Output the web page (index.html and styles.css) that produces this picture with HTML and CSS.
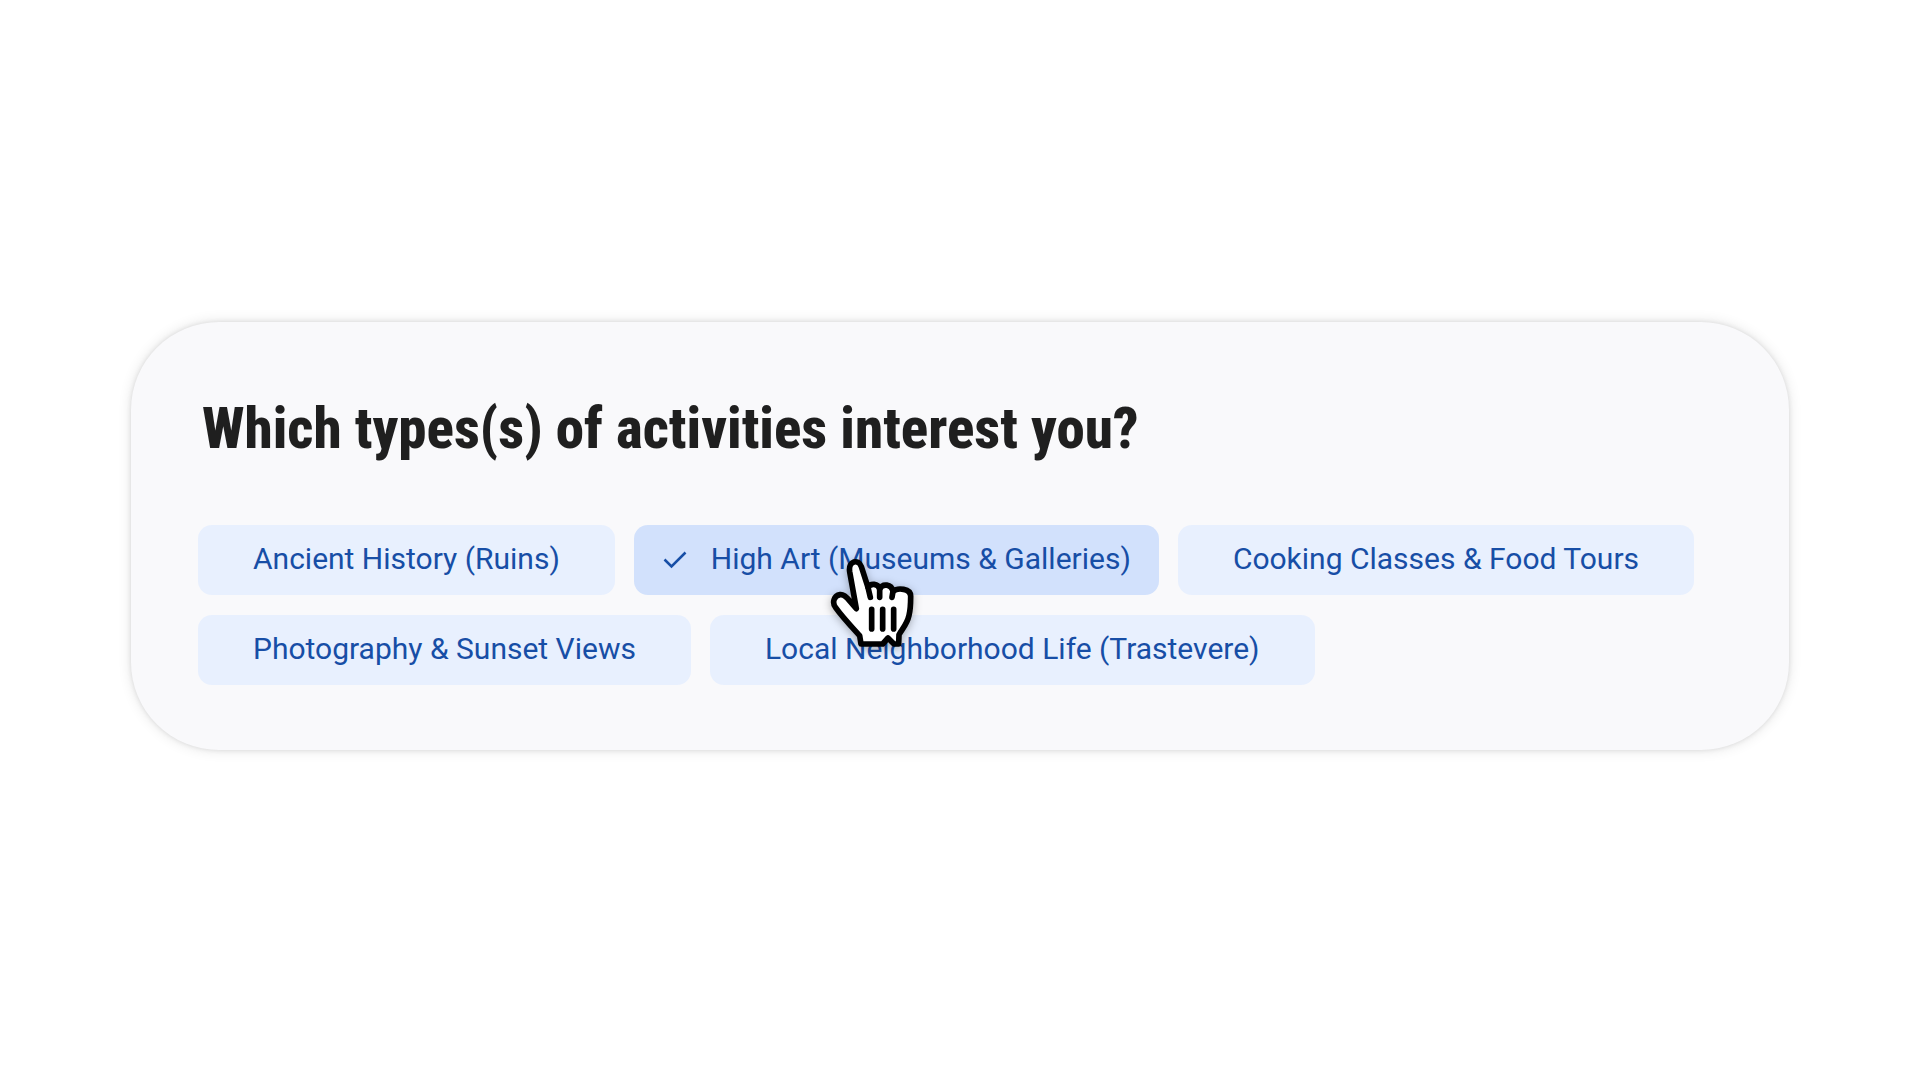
FILE: index.html
```html
<!DOCTYPE html>
<html lang="en">
<head>
<meta charset="utf-8">
<meta name="viewport" content="width=device-width, initial-scale=1">
<title>Activities</title>
<link rel="stylesheet" href="styles.css">
</head>
<body>
<main class="page">
  <section class="card" aria-labelledby="question">
    <h1 class="question" id="question">Which types(s) of activities interest you?</h1>
    <div class="chips" role="group" aria-labelledby="question">
      <label class="chip"><input class="chip-input" type="checkbox" name="activity">Ancient History (Ruins)</label>
      <label class="chip chip-selected">
        <input class="chip-input" type="checkbox" name="activity" checked>
        <svg class="check" viewBox="0 0 26 26" aria-hidden="true"><path d="M2.5 13.5 9.5 20.500 23.500 6.500"/></svg>
        <span>High Art (Museums &amp; Galleries)</span>
        <svg class="pointer" viewBox="51 48 276 288" aria-hidden="true">
          <path class="hand" d="M153 312 L149 287 C126 262 96 230 77 203 C65 187 72 167 90 164 C103 162 112 174 119 183 L139 206 L119 95 C114 62 146 56 154 80 L174 142 C182 129 204 130 209 147 C218 129 244 132 249 154 C262 143 303 144 302 170 C302 190 301 210 297 226 C291 254 275 268 267 284 L266 312 H252 L234 294 L218 312 Z"/>
          <path class="line" d="M174 142 L181 172 M209 147 V172 M249 154 L246 172"/>
          <path class="line" d="M185 208 V267 M218 208 V267 M251 208 V267"/>
        </svg>
      </label>
      <label class="chip"><input class="chip-input" type="checkbox" name="activity">Cooking Classes &amp; Food Tours</label>
      <label class="chip"><input class="chip-input" type="checkbox" name="activity">Photography &amp; Sunset Views</label>
      <label class="chip"><input class="chip-input" type="checkbox" name="activity">Local Neighborhood Life (Trastevere)</label>
    </div>
  </section>
</main>
</body>
</html>
```
FILE: styles.css
```css
* {
  box-sizing: border-box;
}

body {
  margin: 0;
  background: #fff;
}

.page {
  display: flex;
  align-items: center;
  min-height: 100vh;
  padding: 24px 131px 32px;
}

.card {
  flex: 1;
  padding: 75px 56px 65px 67px;
  border-radius: 88px;
  background: #f9f9fb;
  box-shadow: 0 0 5px rgba(0, 0, 0, 0.1), 0 0 14px rgba(0, 0, 0, 0.11);
}

.question {
  margin: 0 0 64px;
  padding-left: 4px;
  color: #1f1f1f;
  font: 800 57px/64px "Roboto Condensed", Roboto, sans-serif;
}

.chips {
  display: flex;
  flex-wrap: wrap;
  gap: 20px 19px;
}

.chip {
  position: relative;
  display: flex;
  align-items: center;
  padding: 0 55px 2px;
  border-radius: 14px;
  background: #e8f0fe;
  color: #174ea6;
  font: 450 30px/68px Roboto, sans-serif;
  cursor: pointer;
}

.chip-selected {
  gap: 23px;
  padding: 0 28px 2px;
  background: #d2e1fc;
}

/* The whole chip is the control, so the native box covers it unseen. */
.chip-input {
  position: absolute;
  inset: 0;
  width: 100%;
  height: 100%;
  margin: 0;
  border-radius: 14px;
  appearance: none;
  cursor: pointer;
}

.check {
  width: 26px;
  height: 26px;
  fill: none;
  stroke: currentColor;
  stroke-width: 2.5;
}

.pointer {
  position: absolute;
  z-index: 1;
  top: 31px;
  left: 193px;
  width: 92px;
  height: 96px;
  overflow: visible;
  filter: drop-shadow(0 2px 4px rgba(0, 0, 0, 0.3));
  pointer-events: none;
}

.hand,
.line {
  stroke: #000;
  stroke-width: 17;
  stroke-linecap: round;
  stroke-linejoin: round;
}

.hand {
  fill: #fff;
}

.line {
  fill: none;
}
```
